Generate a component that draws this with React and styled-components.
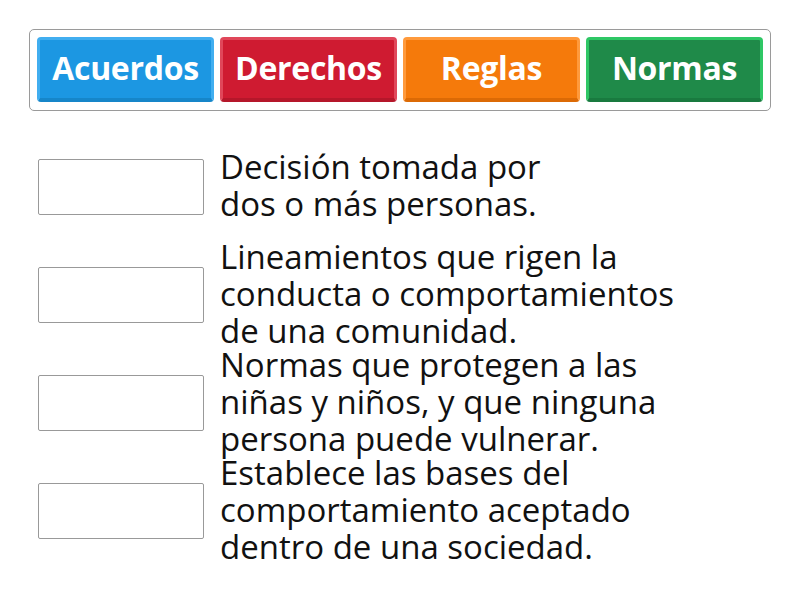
import React from "react";
import styled, { createGlobalStyle } from "styled-components";

const Global = createGlobalStyle`
  html, body { margin: 0; padding: 0; background: #fff; }
  body { font-family: "Open Sans", "Noto Sans", sans-serif; }
`;

const Page = styled.div`
  width: 800px;
  height: 600px;
  box-sizing: border-box;
  padding: 29px 29px 0 29px;
  overflow: hidden;
`;

const Bank = styled.div`
  box-sizing: border-box;
  width: 742px;
  height: 82px;
  border: 1px solid #9a9a9a;
  border-radius: 5px;
  padding: 7px;
  display: flex;
  gap: 6px;
`;

const Tile = styled.div`
  box-sizing: border-box;
  width: 177px;
  height: 65px;
  border-radius: 4px;
  background: ${(p) => p.$base};
  border-top: 3px solid ${(p) => p.$light};
  border-left: 3px solid ${(p) => p.$light};
  border-right: 3px solid ${(p) => p.$light};
  border-bottom: 4px solid ${(p) => p.$dark};
  padding-bottom: 3px;
  display: flex;
  align-items: center;
  justify-content: center;
  color: #fff;
  font-weight: 700;
  font-size: 32px;
  letter-spacing: -0.3px;
  white-space: nowrap;
`;

const Rows = styled.div`
  margin-top: 22px;
  display: flex;
  flex-direction: column;
`;

const Row = styled.div`
  height: 108px;
  display: flex;
  align-items: center;
  padding-left: 9px;
`;

const Slot = styled.div`
  box-sizing: border-box;
  width: 166px;
  height: 56px;
  border: 1px solid #999;
  border-radius: 2px;
  flex: none;
`;

const Clue = styled.div`
  margin-left: 16px;
  margin-top: -4px;
  font-size: 33px;
  line-height: 37px;
  color: #111;
  white-space: nowrap;
`;

const tiles = [
  { label: "Acuerdos", base: "#1c97e2", light: "#41aef0", dark: "#1686c9" },
  { label: "Derechos", base: "#cf1b31", light: "#e0475a", dark: "#b5172a" },
  { label: "Reglas", base: "#f57a0b", light: "#ff9a3c", dark: "#dc6a05" },
  { label: "Normas", base: "#1f8a49", light: "#2fc765", dark: "#197a3f" },
];

const clues = [
  ["Decisión tomada por", "dos o más personas."],
  ["Lineamientos que rigen la", "conducta o comportamientos", "de una comunidad."],
  ["Normas que protegen a las", "niñas y niños, y que ninguna", "persona puede vulnerar."],
  ["Establece las bases del", "comportamiento aceptado", "dentro de una sociedad."],
];

export default function App() {
  return (
    <Page>
      <Global />
      <Bank>
        {tiles.map((t) => (
          <Tile key={t.label} $base={t.base} $light={t.light} $dark={t.dark}>
            {t.label}
          </Tile>
        ))}
      </Bank>
      <Rows>
        {clues.map((lines, i) => (
          <Row key={i}>
            <Slot />
            <Clue>
              {lines.map((l, j) => (
                <div key={j}>{l}</div>
              ))}
            </Clue>
          </Row>
        ))}
      </Rows>
    </Page>
  );
}
